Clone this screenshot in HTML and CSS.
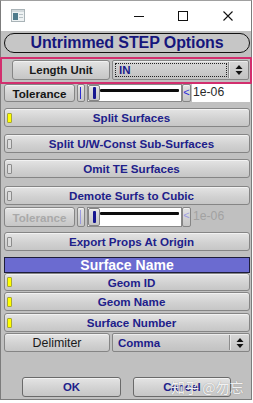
FILE: index.html
```html
<!DOCTYPE html>
<html>
<head>
<meta charset="utf-8">
<link rel="stylesheet" href="styles.css">
</head>
<body>
<div class="win">
  <div class="titlebar">
    <svg class="appicon" width="14" height="13" viewBox="0 0 14 13">
      <rect x="0.5" y="0.5" width="13" height="12" fill="#eef2f3" stroke="#a9b3b7"/>
      <rect x="1" y="1" width="12" height="2" fill="#d3dadd"/>
      <rect x="2" y="4" width="5" height="7" fill="#4f7b8c"/>
      <rect x="8" y="5" width="4" height="1" fill="#b9c3c7"/>
      <rect x="8" y="8" width="4" height="1" fill="#b9c3c7"/>
    </svg>
    <svg class="ctl c-min" width="10" height="10" viewBox="0 0 10 10"><rect x="0" y="5" width="10" height="1" fill="#111"/></svg>
    <svg class="ctl c-max" width="10" height="10" viewBox="0 0 10 10"><rect x="0.5" y="0.5" width="9" height="9" fill="none" stroke="#111"/></svg>
    <svg class="ctl c-close" width="10" height="10" viewBox="0 0 10 10"><path d="M0.5 0.5 L9.5 9.5 M9.5 0.5 L0.5 9.5" stroke="#111" stroke-width="1.1"/></svg>
  </div>
  <div class="body">
    <div class="pill">Untrimmed STEP Options</div>

    <div class="row unit-row">
      <div class="btn plain-label unit-label">Length Unit</div>
      <div class="choice">
        <div class="choice-main"><span class="focusbox">IN</span></div>
        <span class="sep"></span>
        <svg class="arrows" width="8" height="12" viewBox="0 0 8 12"><path d="M4 1 L7.5 5 L0.5 5 Z M4 11 L7.5 7 L0.5 7 Z" fill="#111"/></svg>
      </div>
      <div class="highlight"></div>
    </div>

    <div class="row tol-row r-tol1">
      <div class="btn tol-label">Tolerance</div>
      <div class="btn adj"><span class="adj-bar"></span></div>
      <div class="slider"><div class="btn thumb"><span class="thumb-bar"></span></div><span class="track"></span></div>
      <div class="btn lt">&lt;</div>
      <div class="value">1e-06</div>
    </div>

    <div class="btn toggle r-split"><span class="chk on"></span><span class="tlabel">Split Surfaces</span></div>
    <div class="btn toggle r-uw"><span class="chk"></span><span class="tlabel">Split U/W-Const Sub-Surfaces</span></div>
    <div class="btn toggle r-omit"><span class="chk"></span><span class="tlabel">Omit TE Surfaces</span></div>
    <div class="btn toggle r-demote"><span class="chk"></span><span class="tlabel">Demote Surfs to Cubic</span></div>

    <div class="row tol-row r-tol2 disabled">
      <div class="btn tol-label">Tolerance</div>
      <div class="btn adj"><span class="adj-bar"></span></div>
      <div class="slider"><div class="btn thumb"><span class="thumb-bar"></span></div><span class="track"></span></div>
      <div class="btn lt">&lt;</div>
      <div class="value">1e-06</div>
    </div>

    <div class="btn toggle r-export"><span class="chk"></span><span class="tlabel">Export Props At Origin</span></div>

    <div class="header">Surface Name</div>
    <div class="btn toggle r-gid"><span class="chk on"></span><span class="tlabel">Geom ID</span></div>
    <div class="btn toggle r-gname"><span class="chk on"></span><span class="tlabel">Geom Name</span></div>
    <div class="btn toggle r-snum"><span class="chk on"></span><span class="tlabel">Surface Number</span></div>

    <div class="row delim-row">
      <div class="btn plain-label delim-label">Delimiter</div>
      <div class="choice">
        <div class="choice-main"><span class="ctext">Comma</span></div>
        <span class="sep"></span>
        <svg class="arrows" width="8" height="12" viewBox="0 0 8 12"><path d="M4 1 L7.5 5 L0.5 5 Z M4 11 L7.5 7 L0.5 7 Z" fill="#111"/></svg>
      </div>
    </div>

    <div class="row actions">
      <div class="btn action ok">OK</div>
      <div class="btn action cancel">Cancel</div>
    </div>
  </div>
  <div class="watermark">知乎 @勿忘</div>
</div>
</body>
</html>
```

FILE: styles.css
```css
* { box-sizing: border-box; margin: 0; padding: 0; }
html, body { width: 253px; height: 403px; background: #ffffff; overflow: hidden; }
body { font-family: "Liberation Sans", Arial, sans-serif; }

.win {
  position: relative;
  width: 252px;
  height: 400px;
  border: 1px solid #7c7c7c;
  border-top-color: #a0a0a0;
  display: flex;
  flex-direction: column;
  background: #c0c0c0;
}

.titlebar {
  height: 30px;
  flex: none;
  background: #ffffff;
  display: flex;
  align-items: center;
}
.appicon { margin-left: 10px; margin-top: -1px; }
.c-min { margin-left: 109px; }
.c-max { margin-left: 34px; }
.c-close { margin-left: 35px; }

.body {
  flex: 1;
  display: flex;
  flex-direction: column;
  padding: 2px 1px 0 3px;
}

.pill {
  height: 20px;
  border: 1px solid #111;
  border-radius: 10px;
  background: #c6c6c6;
  color: #16167c;
  font-weight: bold;
  font-size: 16px;
  line-height: 18px;
  text-align: center;
  letter-spacing: -0.1px;
}

.row { display: flex; }

.btn {
  border: 1px solid #858585;
  border-radius: 3px;
  background: linear-gradient(#e4e4e4, #d2d2d2 55%, #c6c6c6);
  box-shadow: inset 0 1px 0 #f2f2f2;
}

.unit-row {
  position: relative;
  height: 20px;
  margin-top: 7px;
  padding-left: 8px;
  padding-right: 1px;
}
.plain-label {
  display: flex;
  align-items: center;
  justify-content: center;
  color: #1a1a1a;
}
.unit-label {
  width: 98px;
  font-weight: bold;
  font-size: 11.4px;
}
.choice {
  flex: 1;
  margin-left: 2px;
  display: flex;
  align-items: stretch;
  border: 1px solid #858585;
  border-radius: 2px;
  background: linear-gradient(#d8d8d8, #cacaca 60%, #c2c2c2);
  box-shadow: inset 0 1px 0 #ececec;
}
.choice-main {
  flex: 1;
  display: flex;
  padding: 2px 1px 2px 2px;
}
.focusbox {
  flex: 1;
  border: 1px dotted #222;
  padding-left: 3px;
  color: #1c1c8a;
  font-weight: bold;
  font-size: 11.5px;
  line-height: 13px;
}
.ctext {
  padding-left: 3px;
  color: #1c1c8a;
  font-weight: bold;
  font-size: 11.5px;
  line-height: 15px;
}
.sep {
  width: 1px;
  margin: 1px 0;
  background: #8c8c8c;
  box-shadow: 1px 0 0 #e6e6e6;
}
.arrows { align-self: center; margin: 0 5px 0 6px; }

.highlight {
  position: absolute;
  left: -4px;
  top: -3px;
  right: -2px;
  bottom: -4px;
  border: 2px solid #d22f6e;
  border-radius: 1px;
  pointer-events: none;
}

.tol-row { height: 18px; }
.r-tol1 { margin-top: 4px; }
.r-tol2 { margin-top: 2px; height: 20px; }
.tol-label {
  width: 71px;
  display: flex;
  align-items: center;
  justify-content: center;
  font-weight: bold;
  font-size: 11.6px;
  color: #151515;
}
.adj {
  width: 8px;
  margin-left: 2px;
  border-radius: 2px;
  display: flex;
  justify-content: center;
  padding: 2px 0;
}
.adj-bar { width: 1px; background: #2a2ad0; margin-right: 2px; }
.slider {
  width: 95px;
  margin-left: 2px;
  background: #ffffff;
  border: 1px solid #8a8a8a;
  display: flex;
  align-items: flex-start;
}
.thumb {
  width: 12px;
  height: 100%;
  border-radius: 2px;
  display: flex;
  justify-content: center;
  align-items: center;
}
.thumb-bar { width: 3px; height: 12px; background: #161690; border-radius: 1px; }
.track {
  flex: 1;
  height: 3px;
  margin-top: 4px;
  margin-right: 2px;
  background: #0c0c0c;
  border-radius: 1px;
}
.lt {
  width: 9px;
  border-radius: 2px;
  color: #2b2bd8;
  font-size: 11px;
  line-height: 15px;
  text-align: center;
}
.value {
  flex: 1;
  margin-left: 1px;
  background: #ffffff;
  color: #2a2a2a;
  font-size: 12.2px;
  line-height: 17px;
  padding-left: 1px;
}
.disabled .tol-label { color: #a9a9a9; }
.disabled .adj-bar { background: #9a9ae0; }
.disabled .lt { color: #9a9ae0; }
.disabled .value { background: transparent; color: #a2a2a2; line-height: 19px; }

.toggle {
  height: 19px;
  display: flex;
  align-items: center;
}
.chk {
  width: 5px;
  height: 10px;
  margin-left: 2px;
  margin-right: 2px;
  border: 1px solid #8c8c8c;
  background: #dcdcdc;
  border-radius: 1px;
  flex: none;
}
.chk.on { background: #ffff00; border-color: #a6a63a; }
.tlabel {
  flex: 1;
  text-align: center;
  color: #20208a;
  font-weight: bold;
  font-size: 11.6px;
}

.r-split { margin-top: 6px; }
.r-uw { margin-top: 7px; }
.r-omit { margin-top: 6px; }
.r-demote { margin-top: 8px; }
.r-export { margin-top: 5px; }
.r-gid { height: 18px; }
.r-gname { margin-top: 1px; }
.r-snum { margin-top: 2px; }

.header {
  height: 16px;
  margin-top: 6px;
  background: #6b6bd0;
  border: 1px solid #1e1e3a;
  color: #ffffff;
  font-weight: bold;
  font-size: 14px;
  line-height: 14px;
  text-align: center;
}

.delim-row { height: 19px; margin-top: 1px; }
.delim-label { width: 106px; font-size: 12.4px; }

.actions { margin-top: 25px; height: 20px; padding-left: 18px; }
.action {
  display: flex;
  align-items: center;
  justify-content: center;
  color: #20208a;
  font-weight: bold;
  font-size: 11.4px;
  border-color: #6a6a6a;
}
.ok { width: 99px; }
.cancel { width: 98px; margin-left: 12px; }

.watermark {
  position: absolute;
  left: 170px;
  top: 377px;
  font-family: "Noto Sans CJK SC", sans-serif;
  font-size: 14px;
  line-height: 18px;
  color: rgba(255, 255, 255, 0.9);
  text-shadow: 0 0 1px rgba(90, 90, 90, 0.6);
  white-space: nowrap;
}
```
